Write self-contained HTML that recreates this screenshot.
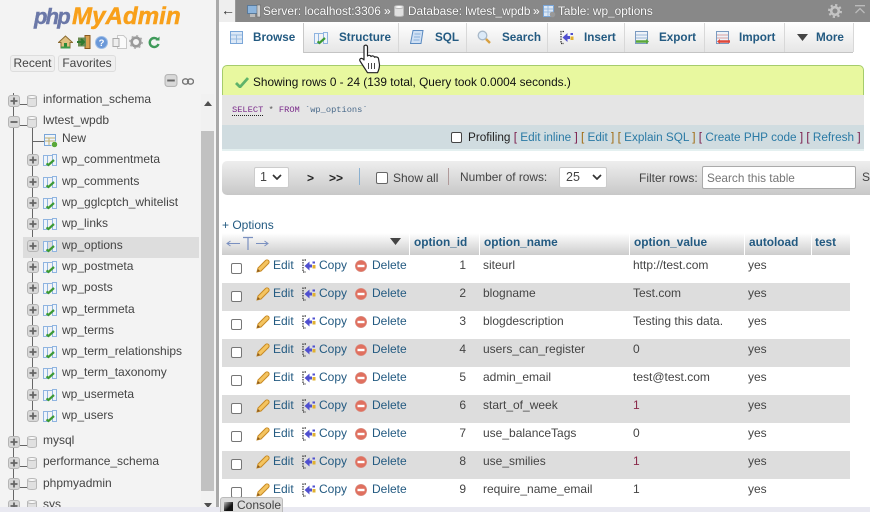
<!DOCTYPE html>
<html><head><meta charset="utf-8"><style>
html,body{margin:0;padding:0}
body{width:870px;height:512px;overflow:hidden;position:relative;background:#fff;font:12px/14px "Liberation Sans",sans-serif;color:#444}
div,svg{position:absolute;white-space:nowrap}
.db{left:43px;color:#444}.tb{left:62px;color:#444}
.tl{top:31px;font-weight:bold;color:#235a81;font-size:11.7px}
.th{top:233px;height:22px;background:linear-gradient(#fff,#ccc)}
.tht{top:235px;font-weight:bold;color:#235a81;font-size:11.85px}
.r{left:222px;width:628px;height:28px}
.g{background:#ddd}
.t{top:3px;color:#444}
.l{top:3px;color:#235a81}
.cb{left:9px;top:8px;width:9px;height:9px;border:1px solid #767676;border-radius:2px;background:#fff}
.p{left:34px;top:4px}.c{left:80px;top:4px}.x{left:133px;top:4px}
.n{right:384px;top:3px;color:#444}
.lk{color:#2a7aa5}.b1{color:#7a1a4a}.b2{color:#a06a10}
</style></head><body>
<svg width="0" height="0" style="left:0;top:0"><defs>
<symbol id="plus" viewBox="0 0 12 12"><rect x=".5" y=".5" width="11" height="11" rx="2.5" fill="#d8d8d8" stroke="#b5b5b5"/><path d="M2.5 6h7M6 2.5v7" stroke="#666" stroke-width="1.8"/></symbol>
<symbol id="minus" viewBox="0 0 12 12"><rect x=".5" y=".5" width="11" height="11" rx="2.5" fill="#d8d8d8" stroke="#b5b5b5"/><path d="M2.5 6h7" stroke="#666" stroke-width="1.8"/></symbol>
<symbol id="dbi" viewBox="0 0 10 12"><path d="M.5 2v8c0 2 9 2 9 0V2z" fill="#e0e0e0" stroke="#b8b8b8"/><ellipse cx="5" cy="2" rx="4.5" ry="1.5" fill="#fafafa" stroke="#b8b8b8"/></symbol>
<symbol id="tbl" viewBox="0 0 14 14"><rect x=".5" y="2.5" width="4" height="10" fill="#eef4fb" stroke="#8fb4e0"/><rect x="9.5" y="1.500" width="4" height="11" fill="#eef4fb" stroke="#8fb4e0"/><path d="M4 2.500h5.500" stroke="#8fb4e0"/><path d="M3.500 10.500l2 1.500L11 7" fill="none" stroke="#3c9a34" stroke-width="2.200"/></symbol>
<symbol id="pen" viewBox="0 0 14 14"><path d="M1 13l1-4 7.500-7.500a1.600 1.600 0 0 1 3 3L5 12z" fill="#f4c460" stroke="#c88a24"/><path d="M1 13l1-3 2 2z" fill="#8a5a20"/></symbol>
<symbol id="cp" viewBox="0 0 14 14"><path d="M4 1H1v12h3" fill="none" stroke="#333" stroke-width="1.200" stroke-dasharray="1.500 1"/><path d="M10 7H6" stroke="#5050d0" stroke-width="3"/><path d="M7.500 2.500L2.500 7l5 4.500z" fill="#5050d0"/><rect x="10.500" y="6" width="3" height="3.500" fill="#e0b030"/><rect x="10.500" y="2.500" width="2.500" height="2" fill="#5050d0"/></symbol>
<symbol id="del" viewBox="0 0 12 12"><circle cx="6" cy="6" r="5.700" fill="#e0705f" stroke="#d89a90" stroke-width=".6"/><rect x="2.500" y="4.800" width="7" height="2.400" fill="#fff"/></symbol>
</defs></svg>

<!-- SIDEBAR -->
<div style="left:0;top:0;width:216px;height:512px;background:#f3f3f3"></div>
<div style="left:216px;top:0;width:3px;height:512px;background:#a9a9a9"></div>
<div style="left:34px;top:3px;font:italic bold 22px/28px 'Liberation Sans',sans-serif;color:#6b78a8;letter-spacing:-1.800px;-webkit-text-stroke:.4px #6b78a8">php</div>
<div style="left:72px;top:3px;font:italic bold 24px/28px 'Liberation Sans',sans-serif;color:#f8a01a;letter-spacing:.1px;-webkit-text-stroke:.5px #f8a01a">MyAdmin</div>
<!-- nav icons -->
<svg style="left:58px;top:35px" width="15" height="14" viewBox="0 0 15 14"><path d="M7.500 1L.5 7.500h2.500V13h9V7.500h2.500z" fill="#e0c080" stroke="#8a6a30"/><rect x="6" y="8" width="3" height="5" fill="#2f8a3a"/><rect x="3" y="11.500" width="9" height="2" fill="#3f9a4a"/></svg>
<svg style="left:76px;top:35px" width="15" height="14" viewBox="0 0 15 14"><rect x="9" y=".5" width="5" height="13" fill="#d8a050" stroke="#8a5a20"/><rect x="2" y="2.500" width="8" height="9" fill="#6a8a50"/><path d="M1 7h7M5 4l3 3-3 3" stroke="#2f7a30" stroke-width="2" fill="none"/></svg>
<svg style="left:95px;top:36px" width="13" height="13" viewBox="0 0 13 13"><circle cx="6.500" cy="6.500" r="6" fill="#6a98d8" stroke="#9cbce6"/><text x="6.500" y="10" font-size="9.500" font-weight="bold" font-family="Liberation Sans" text-anchor="middle" fill="#fff">?</text></svg>
<svg style="left:112px;top:35px" width="15" height="14" viewBox="0 0 15 14"><path d="M5.500 .5h6l3 3V13.500h-9z" fill="#fafafa" stroke="#c8c8c8"/><rect x="1" y="3.500" width="6" height="8" fill="#eee" stroke="#aaa"/></svg>
<svg style="left:129px;top:35px" width="14" height="14" viewBox="0 0 14 14"><circle cx="7" cy="7" r="4.300" fill="none" stroke="#999" stroke-width="2.600"/><circle cx="7" cy="7" r="6" fill="none" stroke="#aaa" stroke-width="1.800" stroke-dasharray="2 2.700"/></svg>
<svg style="left:148px;top:36px" width="12" height="13" viewBox="0 0 12 13"><path d="M10 4A4.500 4.500 0 1 0 10.500 8" fill="none" stroke="#3f9a5a" stroke-width="2.400"/><path d="M7.500 4.500h4v-4z" fill="#3f9a5a"/></svg>
<div style="left:10px;top:55px;width:43px;height:15px;border:1px solid #ddd;border-radius:3px;background:#efefef;text-align:center;color:#444;line-height:15px">Recent</div>
<div style="left:58px;top:55px;width:56px;height:15px;border:1px solid #ddd;border-radius:3px;background:#efefef;text-align:center;color:#444;line-height:15px">Favorites</div>
<svg style="left:164px;top:74px" width="14" height="13"><use href="#minus"/></svg>
<svg style="left:182px;top:78px" width="12" height="7" viewBox="0 0 12 7"><ellipse cx="3.500" cy="3.500" rx="3" ry="2.700" fill="none" stroke="#777" stroke-width="1.400"/><ellipse cx="8.500" cy="3.500" rx="3" ry="2.700" fill="none" stroke="#777" stroke-width="1.400"/></svg>
<!-- tree lines -->
<div style="left:13px;top:93px;width:1px;height:418px;background:#666"></div>
<div style="left:32px;top:127px;width:1px;height:284px;background:#666"></div>
<div style="left:20px;top:104px;width:7px;height:1px;background:#666"></div><div style="left:20px;top:125px;width:7px;height:1px;background:#666"></div>
<div style="left:20px;top:445px;width:7px;height:1px;background:#666"></div><div style="left:20px;top:466px;width:7px;height:1px;background:#666"></div><div style="left:20px;top:487px;width:7px;height:1px;background:#666"></div>
<div style="left:32px;top:141px;width:12px;height:1px;background:#666"></div>
<div style="left:23px;top:237px;width:176px;height:21px;background:#ddd"></div>
<!-- dbs -->
<svg style="left:8px;top:95px" width="12" height="12"><use href="#plus"/></svg><svg style="left:27px;top:95px" width="10" height="12"><use href="#dbi"/></svg><div class="db" style="top:92px">information_schema</div>
<svg style="left:8px;top:116px" width="12" height="12"><use href="#minus"/></svg><svg style="left:27px;top:116px" width="10" height="12"><use href="#dbi"/></svg><div class="db" style="top:113px">lwtest_wpdb</div>
<svg style="left:44px;top:133px" width="14" height="15" viewBox="0 0 14 15"><rect x=".5" y="1.500" width="11" height="11" fill="#eef4fb" stroke="#7aa6d8"/><path d="M1 5h10M1 8h10M5 5v7" stroke="#c0b070"/><circle cx="10.500" cy="11.500" r="3" fill="#5aa83a" stroke="#fff" stroke-width=".5"/></svg><div class="tb" style="top:131px">New</div>
<svg style="left:27px;top:154px" width="12" height="12"><use href="#plus"/></svg><svg style="left:43px;top:153px" width="14" height="14"><use href="#tbl"/></svg><div class="tb" style="top:152px">wp_commentmeta</div>
<svg style="left:27px;top:176px" width="12" height="12"><use href="#plus"/></svg><svg style="left:43px;top:175px" width="14" height="14"><use href="#tbl"/></svg><div class="tb" style="top:174px">wp_comments</div>
<svg style="left:27px;top:197px" width="12" height="12"><use href="#plus"/></svg><svg style="left:43px;top:196px" width="14" height="14"><use href="#tbl"/></svg><div class="tb" style="top:195px">wp_gglcptch_whitelist</div>
<svg style="left:27px;top:218px" width="12" height="12"><use href="#plus"/></svg><svg style="left:43px;top:217px" width="14" height="14"><use href="#tbl"/></svg><div class="tb" style="top:216px">wp_links</div>
<svg style="left:27px;top:240px" width="12" height="12"><use href="#plus"/></svg><svg style="left:43px;top:239px" width="14" height="14"><use href="#tbl"/></svg><div class="tb" style="top:238px">wp_options</div>
<svg style="left:27px;top:261px" width="12" height="12"><use href="#plus"/></svg><svg style="left:43px;top:260px" width="14" height="14"><use href="#tbl"/></svg><div class="tb" style="top:259px">wp_postmeta</div>
<svg style="left:27px;top:282px" width="12" height="12"><use href="#plus"/></svg><svg style="left:43px;top:281px" width="14" height="14"><use href="#tbl"/></svg><div class="tb" style="top:280px">wp_posts</div>
<svg style="left:27px;top:304px" width="12" height="12"><use href="#plus"/></svg><svg style="left:43px;top:303px" width="14" height="14"><use href="#tbl"/></svg><div class="tb" style="top:302px">wp_termmeta</div>
<svg style="left:27px;top:325px" width="12" height="12"><use href="#plus"/></svg><svg style="left:43px;top:324px" width="14" height="14"><use href="#tbl"/></svg><div class="tb" style="top:323px">wp_terms</div>
<svg style="left:27px;top:346px" width="12" height="12"><use href="#plus"/></svg><svg style="left:43px;top:345px" width="14" height="14"><use href="#tbl"/></svg><div class="tb" style="top:344px">wp_term_relationships</div>
<svg style="left:27px;top:367px" width="12" height="12"><use href="#plus"/></svg><svg style="left:43px;top:366px" width="14" height="14"><use href="#tbl"/></svg><div class="tb" style="top:365px">wp_term_taxonomy</div>
<svg style="left:27px;top:389px" width="12" height="12"><use href="#plus"/></svg><svg style="left:43px;top:388px" width="14" height="14"><use href="#tbl"/></svg><div class="tb" style="top:387px">wp_usermeta</div>
<svg style="left:27px;top:410px" width="12" height="12"><use href="#plus"/></svg><svg style="left:43px;top:409px" width="14" height="14"><use href="#tbl"/></svg><div class="tb" style="top:408px">wp_users</div>
<svg style="left:8px;top:436px" width="12" height="12"><use href="#plus"/></svg><svg style="left:27px;top:436px" width="10" height="12"><use href="#dbi"/></svg><div class="db" style="top:433px">mysql</div>
<svg style="left:8px;top:457px" width="12" height="12"><use href="#plus"/></svg><svg style="left:27px;top:457px" width="10" height="12"><use href="#dbi"/></svg><div class="db" style="top:454px">performance_schema</div>
<svg style="left:8px;top:478px" width="12" height="12"><use href="#plus"/></svg><svg style="left:27px;top:478px" width="10" height="12"><use href="#dbi"/></svg><div class="db" style="top:476px">phpmyadmin</div>
<svg style="left:8px;top:500px" width="12" height="12"><use href="#plus"/></svg><svg style="left:27px;top:500px" width="10" height="12"><use href="#dbi"/></svg><div class="db" style="top:497px">sys</div>
<!-- sidebar scrollbar -->
<div style="left:201px;top:94px;width:13px;height:418px;background:#f1f1f1"></div>
<div style="left:201px;top:131px;width:13px;height:360px;background:#c1c1c1"></div>
<svg style="left:204px;top:101px" width="8" height="5"><path d="M0 5L4 0l4 5z" fill="#505050"/></svg>
<svg style="left:204px;top:503px" width="8" height="5"><path d="M0 0L4 5l4-5z" fill="#505050"/></svg>
<div style="left:0;top:507px;width:219px;height:5px;background:#e9e9f1"></div>

<!-- TOP BAR -->
<div style="left:219px;top:0;width:651px;height:22px;background:#888"></div>
<div style="left:219px;top:0;width:16px;height:22px;background:#eee;border-right:1px solid #999"></div>
<div style="left:221px;top:3px;font-size:14px;color:#333">←</div>
<svg style="left:247px;top:4px" width="14" height="14" viewBox="0 0 14 14"><rect x=".5" y="1.500" width="10" height="8" fill="#8cb4dc" stroke="#5a7a9a"/><rect x="10" y="1" width="3.500" height="12" fill="#ccc" stroke="#666" stroke-width=".6"/><rect x="3" y="10" width="5" height="3" fill="#bbb"/></svg>
<div style="left:263px;top:4px;color:#fff;text-shadow:0 0 1px #333;font-size:11.85px">Server: localhost:3306</div>
<div style="left:384px;top:4px;color:#fff">»</div>
<svg style="left:394px;top:5px" width="10" height="12"><use href="#dbi"/></svg>
<div style="left:408px;top:4px;color:#fff;text-shadow:0 0 1px #333;font-size:11.85px">Database: lwtest_wpdb</div>
<div style="left:533px;top:4px;color:#fff">»</div>
<svg style="left:543px;top:4px" width="13" height="14" viewBox="0 0 13 14"><rect x=".5" y="1.500" width="10" height="11" fill="#dce8f6" stroke="#7aa6d8"/><path d="M1 5h9M1 8h9M5 2v10" stroke="#9abbe0"/><circle cx="9.500" cy="10.500" r="2.800" fill="#999"/></svg>
<div style="left:558px;top:4px;color:#fff;text-shadow:0 0 1px #333;font-size:11.85px">Table: wp_options</div>
<svg style="left:828px;top:4px" width="14" height="14" viewBox="0 0 14 14"><circle cx="7" cy="7" r="3.800" fill="none" stroke="#c4c4c4" stroke-width="2.600"/><circle cx="7" cy="7" r="6" fill="none" stroke="#c4c4c4" stroke-width="2" stroke-dasharray="2.200 2.500"/></svg>
<svg style="left:855px;top:5px" width="10" height="10" viewBox="0 0 10 10"><path d="M0 .7h10M.5 8L5 3.500 9.500 8" fill="none" stroke="#bbb" stroke-width="1.300"/></svg>

<!-- TABS -->
<div style="left:219px;top:22px;width:651px;height:30px;background:#fff"></div>
<div style="left:304px;top:22px;width:549px;height:31px;background:linear-gradient(#fff,#e6e6e6);border-bottom:1px solid #c4c4c4;box-sizing:border-box"></div>
<div style="left:303px;top:23px;width:1px;height:30px;background:#c8c8c8"></div>
<div style="left:398px;top:23px;width:1px;height:29px;background:#d8d8d8"></div>
<div style="left:466px;top:23px;width:1px;height:29px;background:#d8d8d8"></div>
<div style="left:547px;top:23px;width:1px;height:29px;background:#d8d8d8"></div>
<div style="left:624px;top:23px;width:1px;height:29px;background:#d8d8d8"></div>
<div style="left:704px;top:23px;width:1px;height:29px;background:#d8d8d8"></div>
<div style="left:784px;top:23px;width:1px;height:29px;background:#d8d8d8"></div>
<div style="left:853px;top:23px;width:1px;height:29px;background:#d8d8d8"></div>
<svg style="left:230px;top:31px" width="13" height="13" viewBox="0 0 13 13"><rect x=".5" y=".5" width="12" height="12" fill="#dce8f6" stroke="#7aa6d8"/><path d="M1 4h11M1 8h11M6.500 4v8" stroke="#9abbe0"/></svg>
<div class="tl" style="left:253px">Browse</div>
<svg style="left:314px;top:31px" width="14" height="14"><use href="#tbl"/></svg>
<div class="tl" style="left:339px">Structure</div>
<svg style="left:410px;top:30px" width="14" height="15" viewBox="0 0 14 15"><path d="M3 .5h10L11 13.500H.5z" fill="#cfe0f4" stroke="#5a8ac0"/><path d="M4.500 4h6M4 7h6M3.500 10h6" stroke="#8ab0dc"/></svg>
<div class="tl" style="left:435px">SQL</div>
<svg style="left:477px;top:30px" width="14" height="14" viewBox="0 0 14 14"><circle cx="5.500" cy="5.500" r="4.300" fill="#dceaf8" stroke="#a8b8c8" stroke-width="1.300"/><path d="M9 9l4 4" stroke="#d8a040" stroke-width="2.400"/></svg>
<div class="tl" style="left:502px">Search</div>
<svg style="left:560px;top:30px" width="14" height="15"><use href="#cp"/></svg>
<div class="tl" style="left:584px">Insert</div>
<svg style="left:635px;top:31px" width="15" height="14" viewBox="0 0 15 14"><rect x=".5" y=".5" width="12" height="12" fill="#eef2f8" stroke="#7a9ac0"/><path d="M1 4h11M1 7h11" stroke="#9ab8d8"/><path d="M1 10.500h11" stroke="#5aa83a" stroke-width="2.500"/><path d="M11 8l3 2.500-3 2.500z" fill="#5aa83a"/></svg>
<div class="tl" style="left:659px">Export</div>
<svg style="left:716px;top:31px" width="15" height="14" viewBox="0 0 15 14"><rect x=".5" y=".5" width="12" height="12" fill="#eef2f8" stroke="#7a9ac0"/><path d="M1 4h11M1 7h11" stroke="#d8a0a0"/><path d="M4 10.500h10" stroke="#e0483a" stroke-width="2.500"/><path d="M4 8L1 10.500 4 13z" fill="#e0483a"/></svg>
<div class="tl" style="left:739px">Import</div>
<svg style="left:797px;top:34px" width="11" height="7"><path d="M0 0h11L5.500 7z" fill="#444"/></svg>
<div class="tl" style="left:816px">More</div>
<!-- hand cursor -->
<svg style="left:358px;top:44px;z-index:9" width="26" height="32" viewBox="0 0 26 32"><path d="M6 2c1.500-1.500 3.500-1 3.500 1v9c1-1 3-1 3.500.5 1-1 3-.8 3.500.7 1-.7 4-.2 4 1.500l1 6c0 3-1 6-2 8H9.500L2 17c-1-2 1-3.500 3-2l1 1z" fill="#fff" stroke="#222" stroke-width="1.200" stroke-linejoin="round"/><path d="M10.500 19v6M13.500 19v6M16.500 19v6" stroke="#333" stroke-width=".9"/></svg>

<!-- MESSAGE -->
<div style="left:222px;top:65px;width:640px;height:30px;background:#e8f89f;border:1px solid #a5cc6c;border-bottom:0;border-radius:5px 5px 0 0;"></div>
<svg style="left:235px;top:76px" width="14" height="12" viewBox="0 0 14 12"><path d="M1 7l4 4 8-9" fill="none" stroke="#5fb36a" stroke-width="2.800"/></svg>
<div style="left:253px;top:75px;color:#111;font-size:11.82px">Showing rows 0 - 24 (139 total, Query took 0.0004 seconds.)</div>
<div style="left:222px;top:95px;width:642px;height:30px;background:#e5e5e5"></div>
<div style="left:232px;top:104px;font:8.7px/12px 'Liberation Mono',monospace;color:#555"><span style="color:#7a2a8a;border-bottom:1px dotted #222">SELECT</span> * <span style="color:#7a2a8a">FROM</span> <span style="color:#4a6a8a">`wp_options`</span></div>
<div style="left:222px;top:125px;width:642px;height:24px;background:#d0dce0"></div>
<div style="left:451px;top:132px;width:9px;height:9px;border:1px solid #444;border-radius:2px;background:#fff"></div>
<div style="left:468px;top:131px;color:#222;font-size:11.75px">Profiling <span class="b1">[</span> <span class="lk">Edit inline</span> <span class="b1">]</span> <span class="b2">[</span> <span class="lk">Edit</span> <span class="b2">]</span> <span class="b2">[</span> <span class="lk">Explain SQL</span> <span class="b2">]</span> <span class="b1">[</span> <span class="lk">Create PHP code</span> <span class="b1">]</span> <span class="b1">[</span> <span class="lk">Refresh</span> <span class="b1">]</span></div>
<div style="left:222px;top:149px;width:642px;height:2px;background:#e4f0f0"></div>

<!-- NAV -->
<div style="left:222px;top:161px;width:660px;height:34px;background:linear-gradient(#eee,#c8c8c8);border-radius:5px"></div>
<div style="left:254px;top:167px;width:33px;height:19px;background:#fff;border:1px solid #ccc;border-radius:2px"></div>
<div style="left:260px;top:170px;color:#444;font-size:12.500px">1</div>
<svg style="left:272px;top:174px" width="10" height="6"><path d="M1 1l4 4 4-4" fill="none" stroke="#333" stroke-width="1.700"/></svg>
<div style="left:307px;top:171px;font-weight:bold;color:#222">&gt;</div>
<div style="left:329px;top:171px;font-weight:bold;color:#222">&gt;&gt;</div>
<div style="left:359px;top:168px;width:1px;height:17px;background:#8ab0d0"></div>
<div style="left:376px;top:172px;width:10px;height:10px;border:1px solid #666;border-radius:2px;background:#fff"></div>
<div style="left:393px;top:171px;color:#444">Show all</div>
<div style="left:448px;top:168px;width:1px;height:17px;background:#b09a9a"></div>
<div style="left:460px;top:170px;color:#444;font-size:11.9px">Number of rows:</div>
<div style="left:559px;top:167px;width:46px;height:19px;background:#fff;border:1px solid #ccc;border-radius:2px"></div>
<div style="left:566px;top:170px;color:#444;font-size:12.500px">25</div>
<svg style="left:592px;top:174px" width="10" height="6"><path d="M1 1l4 4 4-4" fill="none" stroke="#333" stroke-width="1.700"/></svg>
<div style="left:639px;top:171px;color:#444">Filter rows:</div>
<div style="left:702px;top:166px;width:152px;height:21px;background:#fff;border:1px solid #aaa;border-radius:2px"></div>
<div style="left:707px;top:171px;color:#757575;font-size:11.8px">Search this table</div>
<div style="left:862px;top:170px;color:#444">S</div>

<div style="left:222px;top:218px;color:#235a81">+ Options</div>
<!-- TABLE HEAD -->
<div class="th" style="left:222px;width:187px"></div>
<div class="th" style="left:410px;width:69px"></div>
<div class="th" style="left:480px;width:149px"></div>
<div class="th" style="left:630px;width:114px"></div>
<div class="th" style="left:745px;width:66px"></div>
<div class="th" style="left:812px;width:38px"></div>
<svg style="left:226px;top:236px" width="44" height="16" viewBox="0 0 44 16"><path d="M1 7.500h13M4.500 5L1 7.500 4.500 10M30 7.500h12M38.500 5L42 7.500 38.500 10" fill="none" stroke="#7a90c0"/><path d="M17 1.500h10M22 1.500V14" fill="none" stroke="#7a90c0" stroke-width="1.200"/></svg>
<svg style="left:390px;top:238px" width="11" height="7"><path d="M0 0h11L5.500 7z" fill="#444"/></svg>
<div class="tht" style="left:414px">option_id</div>
<div class="tht" style="left:484px">option_name</div>
<div class="tht" style="left:634px">option_value</div>
<div class="tht" style="left:749px">autoload</div>
<div class="tht" style="left:815px">test</div>

<!-- ROWS -->
<div class="r" style="top:255px"><div class="cb"></div><svg class="p" width="14" height="14"><use href="#pen"/></svg><div class="l" style="left:51px">Edit</div><svg class="c" width="14" height="14"><use href="#cp"/></svg><div class="l" style="left:97px">Copy</div><svg class="x" width="12" height="12" style="top:5px"><use href="#del"/></svg><div class="l" style="left:150px">Delete</div><div class="n">1</div><div class="t" style="left:261px">siteurl</div><div class="t" style="left:411px">http://test.com</div><div class="t" style="left:526px">yes</div></div>
<div class="r g" style="top:283px"><div class="cb"></div><svg class="p" width="14" height="14"><use href="#pen"/></svg><div class="l" style="left:51px">Edit</div><svg class="c" width="14" height="14"><use href="#cp"/></svg><div class="l" style="left:97px">Copy</div><svg class="x" width="12" height="12" style="top:5px"><use href="#del"/></svg><div class="l" style="left:150px">Delete</div><div class="n">2</div><div class="t" style="left:261px">blogname</div><div class="t" style="left:411px">Test.com</div><div class="t" style="left:526px">yes</div></div>
<div class="r" style="top:311px"><div class="cb"></div><svg class="p" width="14" height="14"><use href="#pen"/></svg><div class="l" style="left:51px">Edit</div><svg class="c" width="14" height="14"><use href="#cp"/></svg><div class="l" style="left:97px">Copy</div><svg class="x" width="12" height="12" style="top:5px"><use href="#del"/></svg><div class="l" style="left:150px">Delete</div><div class="n">3</div><div class="t" style="left:261px">blogdescription</div><div class="t" style="left:411px">Testing this data.</div><div class="t" style="left:526px">yes</div></div>
<div class="r g" style="top:339px"><div class="cb"></div><svg class="p" width="14" height="14"><use href="#pen"/></svg><div class="l" style="left:51px">Edit</div><svg class="c" width="14" height="14"><use href="#cp"/></svg><div class="l" style="left:97px">Copy</div><svg class="x" width="12" height="12" style="top:5px"><use href="#del"/></svg><div class="l" style="left:150px">Delete</div><div class="n">4</div><div class="t" style="left:261px">users_can_register</div><div class="t" style="left:411px">0</div><div class="t" style="left:526px">yes</div></div>
<div class="r" style="top:367px"><div class="cb"></div><svg class="p" width="14" height="14"><use href="#pen"/></svg><div class="l" style="left:51px">Edit</div><svg class="c" width="14" height="14"><use href="#cp"/></svg><div class="l" style="left:97px">Copy</div><svg class="x" width="12" height="12" style="top:5px"><use href="#del"/></svg><div class="l" style="left:150px">Delete</div><div class="n">5</div><div class="t" style="left:261px">admin_email</div><div class="t" style="left:411px">test@test.com</div><div class="t" style="left:526px">yes</div></div>
<div class="r g" style="top:395px"><div class="cb"></div><svg class="p" width="14" height="14"><use href="#pen"/></svg><div class="l" style="left:51px">Edit</div><svg class="c" width="14" height="14"><use href="#cp"/></svg><div class="l" style="left:97px">Copy</div><svg class="x" width="12" height="12" style="top:5px"><use href="#del"/></svg><div class="l" style="left:150px">Delete</div><div class="n">6</div><div class="t" style="left:261px">start_of_week</div><div class="t" style="left:411px;color:#8a2a4a">1</div><div class="t" style="left:526px">yes</div></div>
<div class="r" style="top:423px"><div class="cb"></div><svg class="p" width="14" height="14"><use href="#pen"/></svg><div class="l" style="left:51px">Edit</div><svg class="c" width="14" height="14"><use href="#cp"/></svg><div class="l" style="left:97px">Copy</div><svg class="x" width="12" height="12" style="top:5px"><use href="#del"/></svg><div class="l" style="left:150px">Delete</div><div class="n">7</div><div class="t" style="left:261px">use_balanceTags</div><div class="t" style="left:411px">0</div><div class="t" style="left:526px">yes</div></div>
<div class="r g" style="top:451px"><div class="cb"></div><svg class="p" width="14" height="14"><use href="#pen"/></svg><div class="l" style="left:51px">Edit</div><svg class="c" width="14" height="14"><use href="#cp"/></svg><div class="l" style="left:97px">Copy</div><svg class="x" width="12" height="12" style="top:5px"><use href="#del"/></svg><div class="l" style="left:150px">Delete</div><div class="n">8</div><div class="t" style="left:261px">use_smilies</div><div class="t" style="left:411px;color:#8a2a4a">1</div><div class="t" style="left:526px">yes</div></div>
<div class="r" style="top:479px"><div class="cb"></div><svg class="p" width="14" height="14"><use href="#pen"/></svg><div class="l" style="left:51px">Edit</div><svg class="c" width="14" height="14"><use href="#cp"/></svg><div class="l" style="left:97px">Copy</div><svg class="x" width="12" height="12" style="top:5px"><use href="#del"/></svg><div class="l" style="left:150px">Delete</div><div class="n">9</div><div class="t" style="left:261px">require_name_email</div><div class="t" style="left:411px">1</div><div class="t" style="left:526px">yes</div></div>

<!-- CONSOLE + bottom strip -->
<div style="left:219px;top:507px;width:651px;height:5px;background:#e9e9f1"></div>
<div style="left:220px;top:497px;width:63px;height:15px;background:#dcdcdc;border:1px solid #bbb;border-bottom:0;border-radius:3px 3px 0 0;box-sizing:border-box"></div>
<div style="left:224px;top:502px;width:9px;height:9px;background:linear-gradient(135deg,#bbb,#111 60%)"></div>
<div style="left:237px;top:498px;color:#444">Console</div>
</body></html>
